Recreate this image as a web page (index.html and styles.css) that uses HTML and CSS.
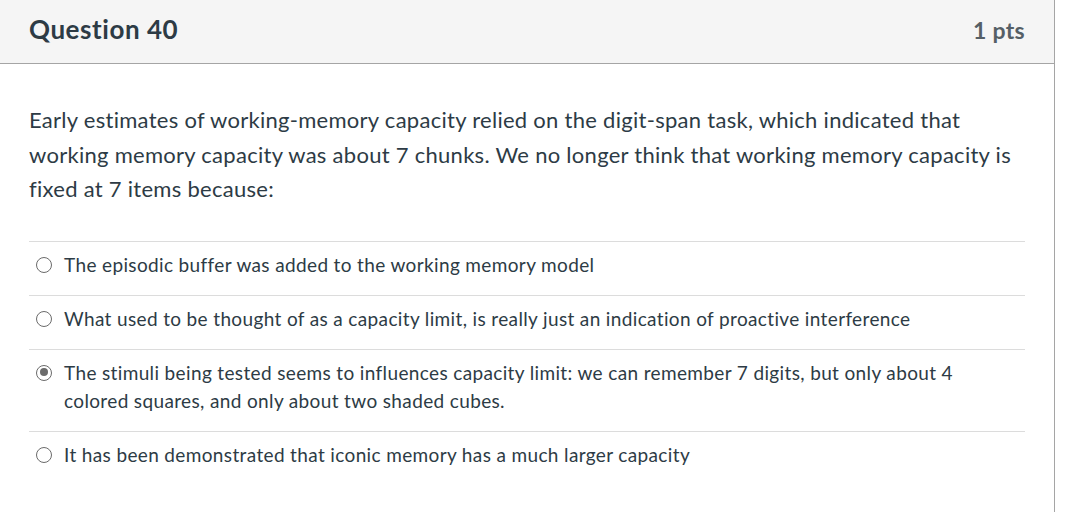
FILE: index.html
```html
<!DOCTYPE html>
<html>
<head>
<meta charset="utf-8">
<link rel="stylesheet" href="styles.css">
</head>
<body>
<div class="card">
  <div class="header">
    <h2 class="title">Question 40</h2>
    <span class="pts">1 pts</span>
  </div>
  <div class="content">
    <p class="question">Early estimates of working-memory capacity relied on the digit-span task, which indicated that working memory capacity was about 7 chunks. We no longer think that working memory capacity is fixed at 7 items because:</p>
    <div class="answers">
      <div class="answer"><span class="radio"></span><span class="label">The episodic buffer was added to the working memory model</span></div>
      <div class="answer"><span class="radio"></span><span class="label">What used to be thought of as a capacity limit, is really just an indication of proactive interference</span></div>
      <div class="answer"><span class="radio checked"></span><span class="label">The stimuli being tested seems to influences capacity limit: we can remember 7 digits, but only about 4 colored squares, and only about two shaded cubes.</span></div>
      <div class="answer"><span class="radio"></span><span class="label">It has been demonstrated that iconic memory has a much larger capacity</span></div>
    </div>
  </div>
</div>
</body>
</html>
```
FILE: styles.css
```css
html, body {
  margin: 0;
  padding: 0;
  background: #fff;
}
body {
  font-family: Lato, "Liberation Sans", sans-serif;
  color: #2d3b45;
}
.card {
  width: 1054px;
  height: 512px;
  border-right: 1px solid #a5a5a5;
}
.header {
  height: 63px;
  background: #f5f5f5;
  border-bottom: 1px solid #a5a5a5;
  display: flex;
  align-items: center;
  justify-content: space-between;
  padding: 0 29px;
  box-sizing: content-box;
}
.title {
  margin: 0;
  font-size: 26px;
  letter-spacing: 0.55px;
  font-weight: 700;
  color: #2d3b45;
  position: relative;
  top: -3px;
}
.pts {
  font-size: 23px;
  letter-spacing: 0.3px;
  font-weight: 700;
  color: #555f66;
  position: relative;
  top: -2px;
}
.content {
  padding: 39px 29px 0;
  width: 996px;
}
.question {
  margin: 0;
  font-size: 22px;
  letter-spacing: 0.28px;
  line-height: 34.5px;
}
.answers {
  margin-top: 34px;
}
.answer {
  border-top: 1px solid #dcdcdc;
  padding: 9px 0 16px;
  display: flex;
  align-items: flex-start;
  font-size: 19px;
  letter-spacing: 0.36px;
  line-height: 28px;
}
.radio {
  flex: none;
  width: 16px;
  height: 16px;
  box-sizing: border-box;
  border: 1.5px solid #6b6b6b;
  border-radius: 50%;
  margin: 6px 12px 0 7px;
  background: #fff;
  position: relative;
}
.radio.checked::after {
  content: "";
  position: absolute;
  left: 2.5px;
  top: 2.5px;
  width: 8px;
  height: 8px;
  border-radius: 50%;
  background: #6b6b6b;
}
.label {
  flex: 1;
  padding-right: 40px;
}
```
